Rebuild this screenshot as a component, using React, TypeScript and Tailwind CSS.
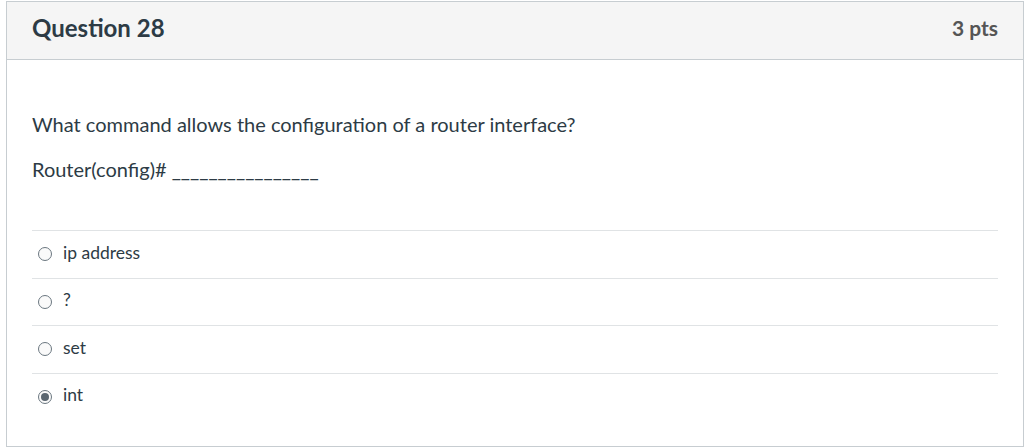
import React from "react";

const answers = [
  { label: "ip address", checked: false },
  { label: "?", checked: false },
  { label: "set", checked: false },
  { label: "int", checked: true },
];

export default function App() {
  return (
    <div className="w-[1024px] h-[447px] bg-white overflow-hidden pt-[1px] pl-[6px]" style={{ fontFamily: "Lato, 'Open Sans', sans-serif" }}>
      <div className="w-[1018px] h-[446px] border border-[#c7cdd1] flex flex-col text-[#2d3b45]">
        <div className="h-[58px] bg-[#f5f5f5] border-b border-[#c7cdd1] flex items-center justify-between pl-[25px] pr-[25px] pb-[5px]">
          <div className="text-[24px] font-bold leading-none">Question 28</div>
          <div className="text-[21px] font-bold leading-none text-[#555] mb-[1px]">3 pts</div>
        </div>
        <div className="pl-[25px] pr-[25px] pt-[51px]">
          <p className="text-[20px] leading-[27px]">What command allows the configuration of a router interface?</p>
          <p className="text-[20px] leading-[27px] mt-[18px]">Router(config)# ________________</p>
          <div className="mt-[47px]">
            {answers.map((a) => (
              <div key={a.label} className="h-[47.5px] border-t border-[#e0e3e5] flex items-center pl-[6px]">
                <span className="w-[14px] h-[14px] rounded-full border border-[#6b7780] flex items-center justify-center bg-[#fafafa] mr-[11px]">
                  {a.checked && <span className="w-[8px] h-[8px] rounded-full bg-[#5a6670]" />}
                </span>
                <span className="text-[17.5px] leading-none mb-[4px]">{a.label}</span>
              </div>
            ))}
          </div>
        </div>
      </div>
    </div>
  );
}
